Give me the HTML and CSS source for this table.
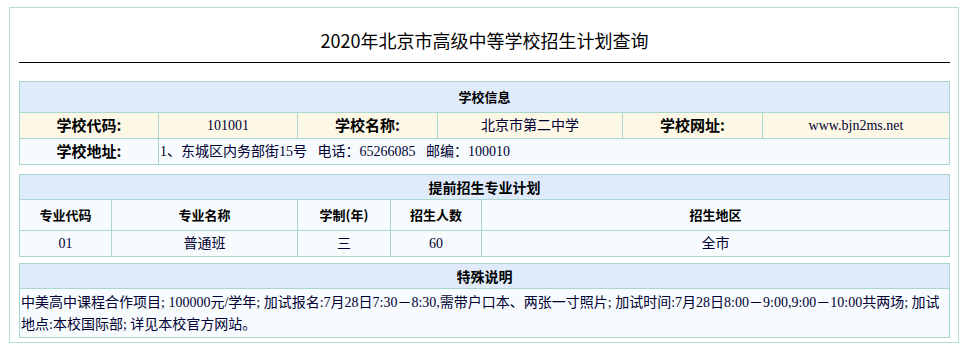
FILE: index.html
```html
<!DOCTYPE html>
<html lang="zh-CN">
<head>
<meta charset="utf-8">
<title>2020年北京市高级中等学校招生计划查询</title>
<link rel="stylesheet" href="styles.css">
</head>
<body>
<div class="page">
  <h1 class="title">2020年北京市高级中等学校招生计划查询</h1>

  <table class="grid info">
    <colgroup>
      <col class="c139"><col class="c139"><col class="c140"><col class="c185"><col class="c140"><col>
    </colgroup>
    <tr class="head"><th colspan="6" class="small">学校信息</th></tr>
    <tr class="cream">
      <th class="label">学校代码:</th><td>101001</td>
      <th class="label">学校名称:</th><td>北京市第二中学</td>
      <th class="label">学校网址:</th><td>www.bjn2ms.net</td>
    </tr>
    <tr class="light">
      <th class="label">学校地址:</th>
      <td colspan="5" class="left">1、东城区内务部街15号&nbsp;&nbsp; 电话：65266085&nbsp;&nbsp; 邮编：100010</td>
    </tr>
  </table>

  <table class="grid plan">
    <colgroup>
      <col class="c92"><col class="c186"><col class="c93"><col class="c91"><col>
    </colgroup>
    <tr class="head short"><th colspan="5">提前招生专业计划</th></tr>
    <tr class="light tall">
      <th class="small">专业代码</th><th class="small">专业名称</th><th class="small">学制(年)</th><th class="small">招生人数</th><th class="small">招生地区</th>
    </tr>
    <tr class="light">
      <td>01</td><td>普通班</td><td>三</td><td>60</td><td>全市</td>
    </tr>
  </table>

  <table class="grid note">
    <tr class="head short"><th>特殊说明</th></tr>
    <tr class="light">
      <td class="text">中美高中课程合作项目; 100000元/学年; 加试报名:7月28日7:30－8:30,需带户口本、两张一寸照片; 加试时间:7月28日8:00－9:00,9:00－10:00共两场; 加试地点:本校国际部; 详见本校官方网站。</td>
    </tr>
  </table>
</div>
</body>
</html>
```

FILE: styles.css
```css
html, body {
  margin: 0;
  padding: 0;
  background: #ffffff;
}

.page {
  box-sizing: border-box;
  width: 950px;
  height: 336px;
  margin: 7px 0 0 9px;
  padding: 0 8px 0 9px;
  border: 1px solid #b5ddd5;
  font-family: "Liberation Serif", "Noto Sans CJK SC", serif;
  font-size: 14px;
  color: #000033;
}

.title {
  box-sizing: border-box;
  height: 55px;
  margin: 0;
  padding-top: 19px;
  line-height: 26px;
  border-bottom: 1px solid #000000;
  font-family: "Noto Sans CJK SC", sans-serif;
  font-size: 18px;
  font-weight: normal;
  color: #000000;
  text-align: center;
}

.grid {
  width: 931px;
  border-collapse: collapse;
  table-layout: fixed;
}

.grid th,
.grid td {
  border: 1px solid #a9d7cf;
  padding: 0 1px;
  text-align: center;
  vertical-align: middle;
  line-height: 20px;
}

.grid th {
  font-family: "Noto Sans CJK SC", sans-serif;
  font-weight: bold;
  color: #000000;
}

.grid th.small { font-size: 13px; }
.grid th.label { font-size: 15px; padding-bottom: 2px; }

.info { margin-top: 18px; }
.plan { margin-top: 9px; }
.note { margin-top: 6px; }

.c139 { width: 139px; }
.c140 { width: 140px; }
.c185 { width: 185px; }
.c92 { width: 92px; }
.c186 { width: 186px; }
.c93 { width: 93px; }
.c91 { width: 91px; }

.grid tr { height: 26px; }
.grid tr.head { height: 31px; background: #dfebfb; }
.grid tr.head.short { height: 25px; }
.grid tr.tall { height: 31px; }
.cream { background: #fdf8e6; }
.light { background: #f7fbfe; }

.grid td.left { text-align: left; }

.grid td.text {
  text-align: left;
  line-height: 22px;
  padding: 3px 1px 1px 1px;
}
```
